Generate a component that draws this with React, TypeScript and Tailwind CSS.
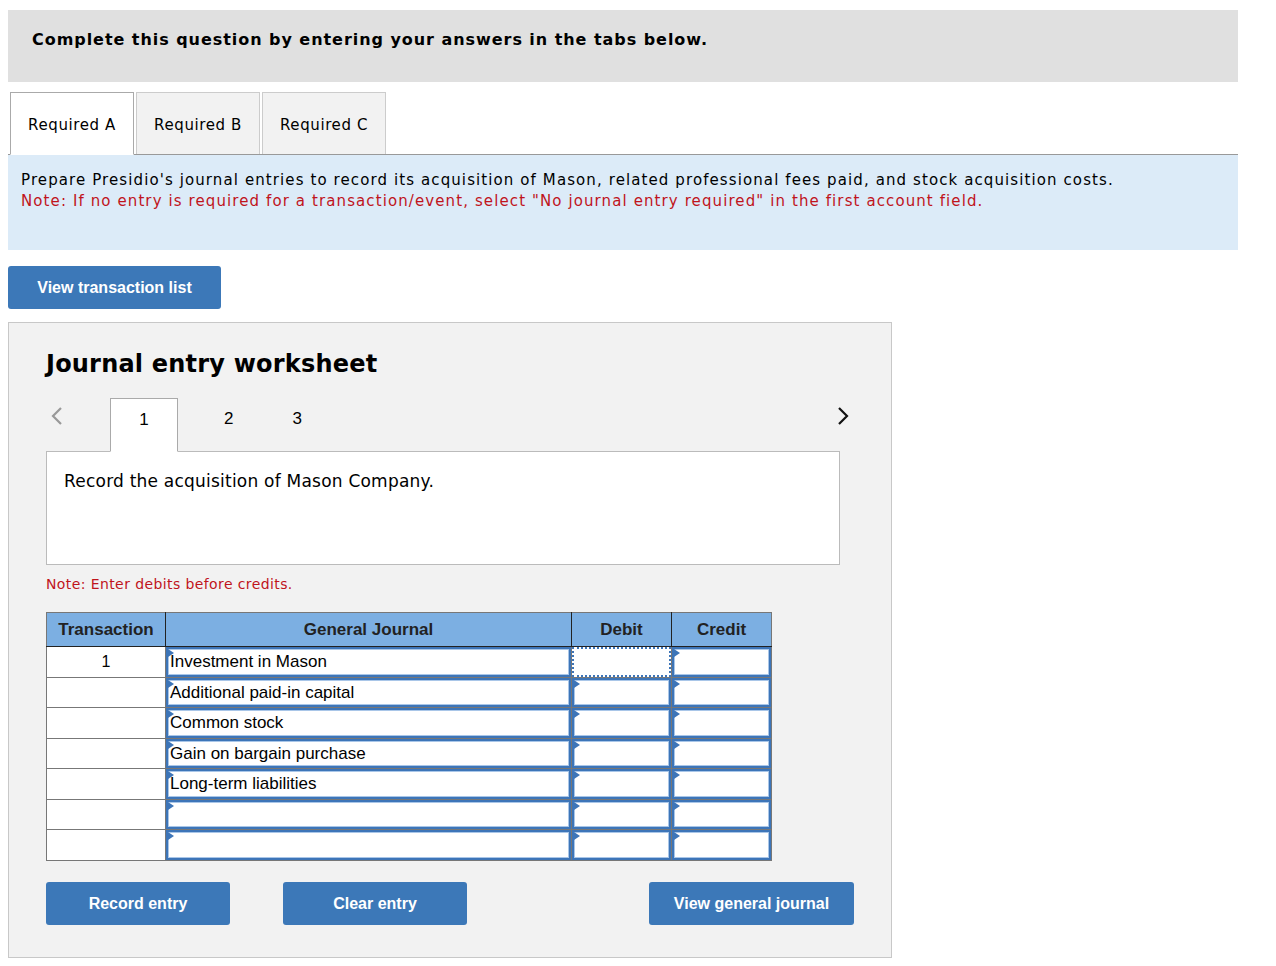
import React from 'react';

const verdana = { fontFamily: '"DejaVu Sans", Verdana, sans-serif' };
const arial = { fontFamily: '"Liberation Sans", Arial, sans-serif' };

const rows = [
  { tx: '1', account: 'Investment in Mason' },
  { tx: '', account: 'Additional paid-in capital' },
  { tx: '', account: 'Common stock' },
  { tx: '', account: 'Gain on bargain purchase' },
  { tx: '', account: 'Long-term liabilities' },
  { tx: '', account: '' },
  { tx: '', account: '' },
];

function Marker() {
  return (
    <span className="absolute left-0 top-0 w-0 h-0 border-y-[4px] border-y-transparent border-l-[6px] border-l-[#3d75b8]" />
  );
}

function InputCell({ text, focused, tall }: { text?: string; focused?: boolean; tall: boolean }) {
  return (
    <td className={`border border-[#777] p-0 bg-white ${tall ? 'h-[31px]' : 'h-[30px]'}`}>
      <div
        className={
          (tall ? 'h-[30px] ' : 'h-[29px] ') +
          (focused
            ? 'relative border-2 border-dotted border-[#3d75b8] bg-white'
            : 'relative border-2 border-[#3d75b8] shadow-[inset_0_0_0_1px_#a9c6e8] bg-white')
        }
      >
        {!focused && <Marker />}
        <span className="absolute left-[2px] top-[3px] text-[17px] text-black leading-[20px]">{text}</span>
      </div>
    </td>
  );
}

function BlueButton({ label, className }: { label: string; className: string }) {
  return (
    <button
      className={`h-[43px] rounded-[3px] bg-[#3c78b8] text-white text-[16px] font-bold ${className}`}
      style={arial}
    >
      {label}
    </button>
  );
}

export default function App() {
  return (
    <div className="w-[1276px] min-h-[966px] bg-white pt-[10px] pl-[8px] text-black" style={verdana}>
      <div className="w-[1230px] h-[72px] bg-[#e0e0e0] pl-[24px] pt-[20px]">
        <h1 className="text-[16px] font-bold leading-[20px] tracking-[0.95px]">
          Complete this question by entering your answers in the tabs below.
        </h1>
      </div>

      <div className="w-[1230px] mt-[10px] flex items-end border-b border-[#999] h-[63px]">
        <div className="ml-[2px] w-[124px] h-[63px] -mb-px bg-white border border-[#aaa] border-b-white flex items-center justify-center pt-[3px] text-[15px] tracking-[0.6px]">
          Required A
        </div>
        <div className="ml-[2px] w-[124px] h-[62px] bg-[#f2f2f2] border border-[#ccc] border-b-0 flex items-center justify-center pt-[3px] text-[15px] tracking-[0.6px]">
          Required B
        </div>
        <div className="ml-[2px] w-[124px] h-[62px] bg-[#f2f2f2] border border-[#ccc] border-b-0 flex items-center justify-center pt-[3px] text-[15px] tracking-[0.6px]">
          Required C
        </div>
      </div>

      <div className="w-[1230px] h-[95px] bg-[#dcebf8] pl-[13px] pt-[15px] text-[15px] leading-[21px] tracking-[1.1px]">
        <p>Prepare Presidio's journal entries to record its acquisition of Mason, related professional fees paid, and stock acquisition costs.</p>
        <p className="text-[#c0141c]">
          Note: If no entry is required for a transaction/event, select "No journal entry required" in the first account field.
        </p>
      </div>

      <BlueButton label="View transaction list" className="mt-[16px] w-[213px]" />

      <div className="mt-[13px] w-[884px] h-[636px] bg-[#f2f2f2] border border-[#c8c8c8] pl-[37px] pt-[25px]">
        <h2 className="text-[24px] font-bold leading-[32px] tracking-[0.2px]">Journal entry worksheet</h2>

        <div className="mt-[18px] w-[794px] flex items-end h-[53px] relative">
          <svg className="absolute left-[4px] top-[8px]" width="14" height="20" viewBox="0 0 14 20">
            <path d="M11 2 L3 10 L11 18" fill="none" stroke="#999" strokeWidth="2.2" />
          </svg>
          <div
            className="ml-[64px] w-[68px] h-[54px] -mb-px bg-white border border-[#aaa] border-b-white flex items-start justify-center pt-[8px] text-[17px] relative z-10"
            style={arial}
          >
            1
          </div>
          <div className="self-start pt-[8px] flex text-[17px]" style={arial}>
            <span className="ml-[46px]">2</span>
            <span className="ml-[59px]">3</span>
          </div>
          <svg className="absolute left-[790px] top-[8px]" width="14" height="20" viewBox="0 0 14 20">
            <path d="M3 2 L11 10 L3 18" fill="none" stroke="#111" strokeWidth="2.2" />
          </svg>
        </div>
        <div className="w-[794px] h-[114px] bg-white border border-[#bbb] pl-[17px] pt-[18px] text-[17px] leading-[22px] tracking-[0.22px]">
          Record the acquisition of Mason Company.
        </div>

        <p className="mt-[10px] text-[14px] text-[#c0141c] leading-[18px] tracking-[0.4px]">Note: Enter debits before credits.</p>

        <table className="mt-[19px] border-collapse border border-[#777] text-[17px]" style={arial}>
          <thead>
            <tr className="h-[34px] bg-[#7cafe2] text-[#222] font-bold">
              <th className="w-[119px] border border-[#222] border-l-[#777] border-t-[#777] font-bold">Transaction</th>
              <th className="w-[406px] border border-[#222] border-t-[#777] font-bold">General Journal</th>
              <th className="w-[100px] border border-[#222] border-t-[#777] font-bold">Debit</th>
              <th className="w-[100px] border border-[#222] border-t-[#777] border-r-[#777] font-bold">Credit</th>
            </tr>
          </thead>
          <tbody>
            {rows.map((r, i) => {
              const tall = i % 2 === 0;
              return (
                <tr key={i}>
                  <td className={`border border-[#777] bg-white text-center align-middle p-0 text-[16px] ${tall ? 'h-[31px]' : 'h-[30px]'}`}>
                    {r.tx}
                  </td>
                  <InputCell text={r.account} tall={tall} />
                  <InputCell focused={i === 0} tall={tall} />
                  <InputCell tall={tall} />
                </tr>
              );
            })}
          </tbody>
        </table>

        <div className="mt-[21px] flex w-[808px]">
          <BlueButton label="Record entry" className="w-[184px]" />
          <BlueButton label="Clear entry" className="ml-[53px] w-[184px]" />
          <BlueButton label="View general journal" className="ml-auto w-[205px]" />
        </div>
      </div>
    </div>
  );
}
